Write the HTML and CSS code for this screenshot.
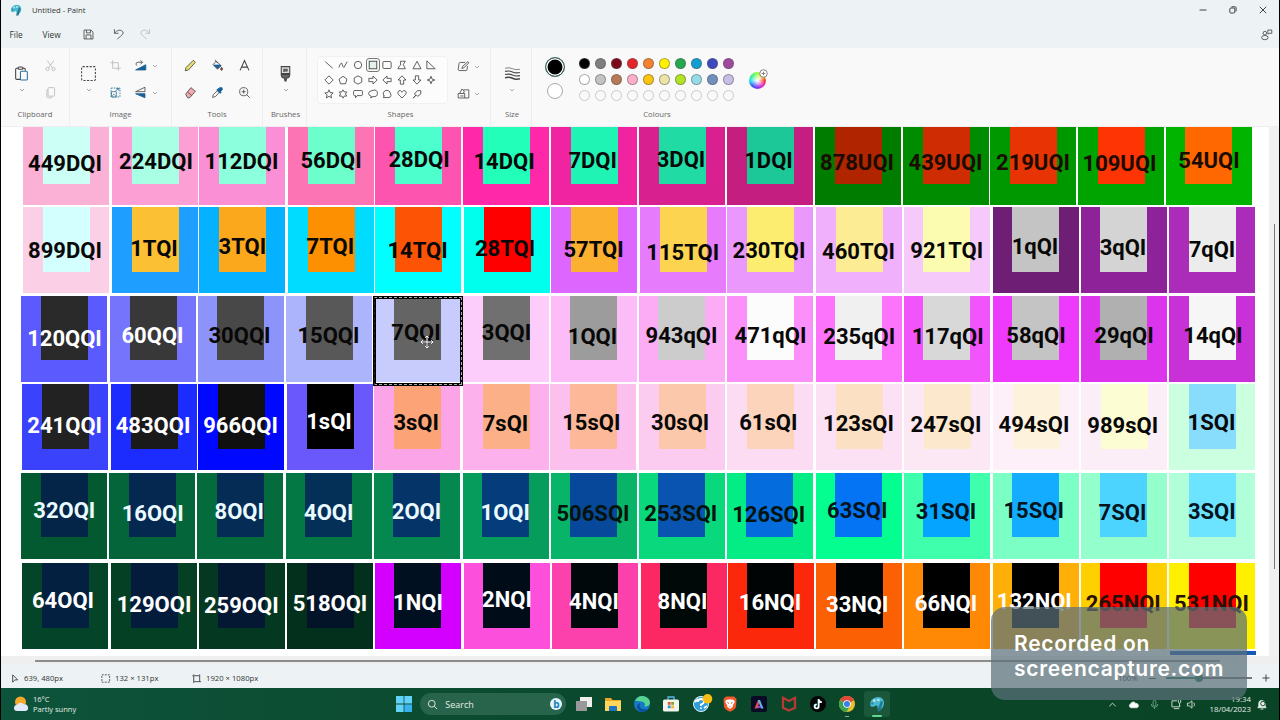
FILE: index.html
```html
<!DOCTYPE html>
<html lang="en-gb">
<head>
    <meta charset="UTF-8">
    <meta name="viewport" content="width=device-width, initial-scale=1.0">
    <title>Untitled - Paint</title>
    <link rel="stylesheet" href="styles.css">
</head>
<body>
<div class="window">
    <header class="titlebar">
        <svg class="logo" viewBox="0 0 24 24"><use href="#palette"/></svg>
        <span class="title">Untitled - Paint</span>
        <div class="winButtons">
            <svg viewBox="0 0 12 12"><path d="M2.5 6h7"/></svg>
            <svg viewBox="0 0 12 12"><rect x="2.8" y="4" width="5" height="5" rx="1"/><path d="M4.5 2.8h3.6q1 0 1 1v3.6"/></svg>
            <svg viewBox="0 0 12 12"><path d="M2.8 2.8l6.4 6.4M9.2 2.8L2.8 9.2"/></svg>
        </div>
    </header>
    <nav class="menubar">
        <span class="menuFile">File</span>
        <span class="menuView">View</span>
        <svg class="icon save" viewBox="0 0 16 16"><path d="M3.5 2.500h7.500l2.500 2.500v8.500h-11v-11zM5.500 2.500v3.500h5v-3.500M5 13.500v-5h6v5"/></svg>
        <svg class="icon undo" viewBox="0 0 16 16"><path d="M3 1.500v5h5M3.200 6.300Q8 .8 12 3.500T11 9.500L6.500 14"/></svg>
        <svg class="icon redo off" viewBox="0 0 16 16"><path d="M13 1.500v5H8M12.800 6.300Q8 .8 4 3.500T5 9.500L9.500 14"/></svg>
        <svg class="icon share" viewBox="0 0 16 16"><circle cx="6" cy="6.300" r="2.200"/><ellipse cx="6" cy="11.800" rx="4" ry="2.600"/><path d="M9.500 2.500h5v4h-3.500l-1.200 1.200z"/></svg>
    </nav>
    <section class="ribbon">
        <div class="group clipboard">
            <div class="tools">
                <div class="big">
                    <svg class="icon large" viewBox="0 0 16 16"><path d="M7 13.500H3.500q-1 0-1-1V4q0-1 1-1H5M9 3h1.500q1 0 1 1v1.500"/><rect x="4.800" y="1.800" width="4.600" height="2.200" rx="1"/><rect class="blueLine" x="7" y="5.800" width="6.500" height="8.400" rx="1"/></svg>
                    <svg class="chev" viewBox="0 0 6 6"><path d="M1 2l2 2 2-2"/></svg>
                </div>
                <div class="pair">
                    <svg class="icon off" viewBox="0 0 16 16"><path d="M4 2l6.500 9M12 2l-6.500 9"/><circle cx="4.300" cy="12.300" r="2"/><circle cx="11.700" cy="12.300" r="2"/></svg>
                    <svg class="icon off" viewBox="0 0 16 16"><rect x="5" y="2" width="8" height="10.500" rx="1"/><path d="M5 4l-1.500 1v7.500q0 2 2 2H10"/></svg>
                </div>
            </div>
            <span class="caption">Clipboard</span>
        </div>
        <div class="group image">
            <div class="tools">
                <div class="big">
                    <svg class="icon large" viewBox="0 0 16 16"><rect class="dashed" x="1.500" y="1.500" width="13" height="13" rx="1"/></svg>
                    <svg class="chev" viewBox="0 0 6 6"><path d="M1 2l2 2 2-2"/></svg>
                </div>
                <div class="pair">
                    <svg class="icon off" viewBox="0 0 16 16"><path d="M4.500 1.500v10H14.500M1.500 4.500h10V14.500"/></svg>
                    <svg class="icon" viewBox="0 0 16 16"><rect class="dashed blueLine" x="2.500" y="2.500" width="11" height="11"/><path class="blueLine" d="M3 7h6v6.500H3zM4 12l2-2 2 2M8 6l4-3M12 6V3H9"/></svg>
                </div>
                <div class="pair wide">
                    <div><svg class="icon" viewBox="0 0 16 16"><path class="blue" d="M14.500 7v6.500H2z"/><path d="M3 8q-1.500-4 2-4h5M8 1.500l2.500 2.500L8 6.500"/></svg><svg class="chev" viewBox="0 0 6 6"><path d="M1 2l2 2 2-2"/></svg></div>
                    <div><svg class="icon" viewBox="0 0 16 16"><path d="M13.500 7L2 7 13.500 1.500z"/><path class="blue" d="M2 9.500h11.500V14.500z"/></svg><svg class="chev" viewBox="0 0 6 6"><path d="M1 2l2 2 2-2"/></svg></div>
                </div>
            </div>
            <span class="caption">Image</span>
        </div>
        <div class="group toolset">
            <div class="toolGrid">
                <svg class="icon" viewBox="0 0 16 16"><path class="yellow" d="M1.500 14.500l1-4L11.500 1.500l2.500 2.500L5.500 13.500z"/></svg>
                <svg class="icon" viewBox="0 0 16 16"><path d="M6.500 2.500l6 6-4.500 4-5.500-5.500zM5 1l3 4"/><path class="blue" d="M3.500 7.500h8.500l-4 4.500z"/><path class="red" d="M13 10q2.500 3 0 4-2.500-1 0-4z"/></svg>
                <svg class="icon" viewBox="0 0 16 16"><path class="thick" d="M2.500 14L8 2l5.500 12M4.500 10h7"/></svg>
                <svg class="icon" viewBox="0 0 16 16"><path class="pink" d="M2 10l6.500-8 5.500 4.500-7 8H4.500z"/><path d="M4.500 7.500l5 4.200"/></svg>
                <svg class="icon" viewBox="0 0 16 16"><path d="M2 14l.8-3.500L9 5l2 2-5.500 6z"/><path class="blue" d="M8 4l1.200-.8L11 2q3.500-1 3 2.500L12 6.500l.5 1.500-1.300 1L7 5z"/></svg>
                <svg class="icon" viewBox="0 0 16 16"><circle cx="7" cy="7" r="5"/><path d="M10.500 10.500L14.500 14.500M4.500 7h5M7 4.500v5"/></svg>
            </div>
            <span class="caption">Tools</span>
        </div>
        <div class="group brushes">
            <div class="tools">
                <div class="big">
                    <svg class="icon large" viewBox="0 0 16 16"><path class="handle" d="M4 1.500h8v6.500H4zM6.500 3.500v3M7 4h2.500v1.500H7"/><path class="tip" d="M4 9h8q0 3-3 3.500l-.5 2.500h-1L7 12.500Q4 12 4 9z"/></svg>
                    <svg class="chev" viewBox="0 0 6 6"><path d="M1 2l2 2 2-2"/></svg>
                </div>
            </div>
            <span class="caption">Brushes</span>
        </div>
        <div class="group shapes">
            <div class="shapeRow">
                <div class="shapeBox">
                    <svg viewBox="0 0 12 12"><path d="M1.500 2l9 8"/></svg>
                    <svg viewBox="0 0 12 12"><path d="M1 9Q4 1 5 5T7 9L11 2"/></svg>
                    <svg viewBox="0 0 12 12"><circle cx="6" cy="6" r="4.400"/></svg>
                    <svg class="chosen" viewBox="0 0 12 12"><rect x="1.500" y="1.500" width="9" height="9"/></svg>
                    <svg viewBox="0 0 12 12"><rect x="1" y="1.800" width="10" height="8.400" rx="1.500"/></svg>
                    <svg viewBox="0 0 12 12"><path d="M4 1.500h6L7.500 5.500 10 10.500H1L3 7l1.500-1z"/></svg>
                    <svg viewBox="0 0 12 12"><path d="M6 1.500l4.800 9H1.200z"/></svg>
                    <svg viewBox="0 0 12 12"><path d="M1 1v9.500h10z"/></svg>
                    <svg viewBox="0 0 12 12"><path d="M6 1L11 6 6 11 1 6z"/></svg>
                    <svg viewBox="0 0 12 12"><path d="M6 1.500l4.700 3.500-1.700 5.500H3L1.300 5z"/></svg>
                    <svg viewBox="0 0 12 12"><path d="M6 1l4.500 2.500v5L6 11 1.500 8.500v-5z"/></svg>
                    <svg viewBox="0 0 12 12"><path d="M1 4h5V1.200L11 6 6 10.800V8H1z"/></svg>
                    <svg viewBox="0 0 12 12"><path d="M11 4H6V1.200L1 6l5 4.800V8h5z"/></svg>
                    <svg viewBox="0 0 12 12"><path d="M4 11V6H1.200L6 1l4.800 5H8v5z"/></svg>
                    <svg viewBox="0 0 12 12"><path d="M4 1v5H1.200L6 11l4.800-5H8V1z"/></svg>
                    <svg viewBox="0 0 12 12"><path d="M6 1.500l1.200 3.300 3.300 1.200-3.300 1.200L6 10.500 4.800 7.200 1.500 6l3.300-1.200z"/></svg>
                    <svg viewBox="0 0 12 12"><path d="M6 1l1.400 3.300 3.600.4-2.700 2.400.8 3.600L6 8.800l-3.100 1.900.8-3.600L1 4.700l3.600-.4z"/></svg>
                    <svg viewBox="0 0 12 12"><path d="M6 1l1.400 2.500h3L9 6l1.400 2.500h-3L6 11 4.600 8.500h-3L3 6 1.600 3.500h3z"/></svg>
                    <svg viewBox="0 0 12 12"><path d="M2 1.800h8q1.300 0 1.300 1.300v3.500q0 1.300-1.300 1.300H5l-2 2.600V7.900H2Q.7 7.900.7 6.600V3.100Q.7 1.800 2 1.800z"/></svg>
                    <svg viewBox="0 0 12 12"><path d="M4 8.700Q.7 7.800.7 5.200T6 1.500t5.300 3.700T6 9L3.200 10.800z"/></svg>
                    <svg viewBox="0 0 12 12"><path d="M2 8Q1 6 2 3.800T6 1.500 10.500 6 6 10.300H1.500L2.800 8z"/></svg>
                    <svg viewBox="0 0 12 12"><path d="M6 10.800L1.600 6.500Q0 4 2 2.300T6 3.800Q7.800.8 10 2.300t.4 4.200z"/></svg>
                    <svg viewBox="0 0 12 12"><path d="M1.500 11L4.500 7.500 2.800 6l3.700-4H10.500v4L6.800 8.800 5 7z"/></svg>
                </div>
                <div class="shapeOpts">
                    <div><svg class="icon" viewBox="0 0 16 16"><path d="M10 3H4Q3 3 2.500 4L1.500 11.500q0 1.500 1.500 1.500h8q1 0 1.200-1L13 7.500"/><path d="M6 10.500l1-2.800L13.500 2l1.200 1.500-6.200 6z"/></svg><svg class="chev" viewBox="0 0 6 6"><path d="M1 2l2 2 2-2"/></svg></div>
                    <div><svg class="icon" viewBox="0 0 16 16"><path d="M8 3.500h6.500v10h-13V8M1.500 8h8v5.500M3.500 7.500l2.500-5 3 2.500-1 2.500M4 11h4"/></svg><svg class="chev" viewBox="0 0 6 6"><path d="M1 2l2 2 2-2"/></svg></div>
                </div>
            </div>
            <span class="caption">Shapes</span>
        </div>
        <div class="group size">
            <div class="tools">
                <div class="big">
                    <svg class="icon large" viewBox="0 0 16 16"><path class="thin" d="M1 3q4-1 7 .5t7 .5"/><path d="M1 6q4-1 7 .5t7 .5"/><path d="M1 9q4-1 7 .5t7 .5"/><path class="fat" d="M1 12q4-1 7 .5t7 .5"/></svg>
                    <svg class="chev" viewBox="0 0 6 6"><path d="M1 2l2 2 2-2"/></svg>
                </div>
            </div>
            <span class="caption">Size</span>
        </div>
        <div class="group colours">
            <div class="colourRow">
                <div class="current">
                    <span class="primary"></span>
                    <span class="secondary"></span>
                </div>
                <div class="swatches" id="swatches"></div>
                <div class="wheel"><svg viewBox="0 0 10 10"><circle cx="5" cy="5" r="4.200"/><path d="M5 3v4M3 5h4"/></svg></div>
            </div>
            <span class="caption">Colours</span>
        </div>
    </section>
    <main class="workspace">
        <div class="canvas" id="canvas">
            <div class="selection"></div>
            <svg class="cursor" viewBox="0 0 14 14"><path class="edge" d="M7 1v12M1 7h12"/><path d="M7 1v12M1 7h12M5.200 2.800L7 1l1.800 1.800M5.200 11.200L7 13l1.800-1.800M2.800 5.200L1 7l1.800 1.800M11.200 5.200L13 7l-1.800 1.800"/></svg>
        </div>
        <div class="scrollV"><span></span></div>
    </main>
    <div class="scrollH"><span></span></div>
    <footer class="status">
        <span class="cell pos"><svg viewBox="0 0 12 12"><path d="M4 2l5.500 5.500H6.500L4 10z"/></svg>639, 480px</span>
        <span class="cell sel"><svg viewBox="0 0 12 12"><rect class="dashed" x="2" y="2" width="8.500" height="8"/></svg>132 × 131px</span>
        <span class="cell dim"><svg viewBox="0 0 12 12"><rect x="3" y="3" width="6.500" height="6.500"/><path d="M1.500 3h1M3 1.500v1M9.500 1.500v1M10 9.500h1M3 10v1"/></svg>1920 × 1080px</span>
        <div class="zoom">
            <span>100%</span>
            <i class="minus"></i>
            <div class="track"><b></b></div>
            <svg viewBox="0 0 10 10"><path d="M5 1.500v7M1.500 5h7"/></svg>
        </div>
    </footer>
</div>

<div class="taskbar">
    <div class="weather">
        <svg viewBox="0 0 16 16"><circle cx="7.500" cy="6" r="5.500" fill="#f5a82a"/><path d="M4 15a3 3 0 0 1 0-6 4 4 0 0 1 7-.5 3.200 3.200 0 0 1 1.500 6.500z" fill="#dfe9fa"/></svg>
        <div><p>16°C</p><p>Partly sunny</p></div>
    </div>
    <div class="apps">
        <svg class="start" viewBox="0 0 16 16"><path fill="#5fd3fa" d="M0 0h7.600v7.600H0zM8.400 0H16v7.600H8.400zM0 8.400h7.600V16H0z"/><path fill="#36b2ee" d="M8.400 8.400H16V16H8.400z"/></svg>
        <div class="search">
            <svg viewBox="0 0 12 12"><circle cx="5.200" cy="5.200" r="3.700"/><path d="M8 8l3 3"/></svg>
            <span>Search</span>
            <i>b</i>
        </div>
        <svg viewBox="0 0 16 16"><path fill="#eee" d="M4 1h12v10H4z"/><path fill="#999" d="M0 5h11v10H0z"/></svg>
        <svg viewBox="0 0 16 16"><path fill="#e9a825" d="M0 2h6l1.500 2H16v11H0z"/><path fill="#ffd65c" d="M0 5h16v10H0z"/><path fill="#1a75c4" d="M4 15v-4q0-1 1-1h6q1 0 1 1v4z"/></svg>
        <svg viewBox="0 0 16 16"><circle cx="8" cy="8" r="8" fill="#1679c8"/><path fill="#55d493" d="M1 5q3-6 9-4.800Q16 2 16 7q-1 4-6 3.500 2-2 0-4T1 5z"/><path fill="#0c4c9c" d="M6 7q-2 6 5 6.500 2 0 3-.7Q11 17 7 15.500T3 10q.5-2 3-3z"/></svg>
        <svg viewBox="0 0 16 16"><path fill="none" stroke="#5bb8e8" stroke-width="1.300" d="M5 4V1h6v3"/><rect y="3.500" width="16" height="12" rx="1.500" fill="#f2f4ee"/><path fill="#e3562e" d="M4.800 6h2.800v2.800H4.800z"/><path fill="#74a92b" d="M8.200 6H11v2.800H8.200z"/><path fill="#2d8fd5" d="M4.800 9.500h2.800v2.800H4.800z"/><path fill="#f5b52a" d="M8.200 9.500H11v2.800H8.200z"/></svg>
        <svg class="help" viewBox="0 0 20 18"><circle cx="8" cy="10" r="7.500" fill="#2f9edb" stroke="#dff3fb"/><path fill="none" stroke="#fff" stroke-width="1.800" d="M5 8q0-3 3-3t3 2.500q0 2-3 3V12M8 13.500v1.500M2 8l3-3M11 14l3-2"/><circle cx="14.500" cy="4.800" r="4.800" fill="#fcbc16"/></svg>
        <svg viewBox="0 0 16 16"><path fill="#f05a2c" d="M4 .5h8L14.500 3 14 11q-1 2.500-6 4.800Q3 13.500 2 11L1.500 3z"/><path fill="#fff" d="M4 4l4-.8L12 4l.8 2-2 3.500.2 1L8 13l-3-2.500.2-1L3.200 6z"/><path fill="#f05a2c" d="M5 6l2 .7-.5 1.500zM11 6l-2 .7.500 1.500zM7 10.500h2l-1 1z"/></svg>
        <svg viewBox="0 0 16 16"><rect width="16" height="16" rx="2" fill="#070b24"/><path fill="#ec4a4a" d="M3.500 12.500L7 4h2l-2.500 8.500z"/><path fill="#5db4f4" d="M7 4h2l3.500 8.500H10L7.500 6z"/><path fill="#a753cf" d="M6 10l4 .2v1.500L5.500 12z"/></svg>
        <svg viewBox="0 0 16 16"><path fill="none" stroke="#b73a36" stroke-width="2.300" d="M2 1.800L8 5l6-3.200v10L8 14.500 2 11.800z"/></svg>
        <svg viewBox="0 0 16 16"><circle cx="8" cy="8" r="8" fill="#050505"/><path fill="none" stroke="#59e3df" stroke-width="1.500" d="M8.300 3v7.200a2 2 0 1 1-2-2M8.500 3.500q.7 2.500 3 2.700"/><path fill="none" stroke="#fff" stroke-width="1.500" d="M8.800 3.300v7.200a2 2 0 1 1-2-2M8.800 3.500q.7 2.500 3 2.700"/></svg>
        <div class="running"><svg viewBox="0 0 16 16"><circle cx="8" cy="8" r="8" fill="#e8c030"/><path fill="#dd4a3c" d="M8 8L1 4.200A8 8 0 0 1 15 4.200z"/><path fill="#37a552" d="M8 8L1 4.200A8 8 0 0 0 7.500 16L11 10z"/><circle cx="8" cy="8" r="3.800" fill="#fff"/><circle cx="8" cy="8" r="3" fill="#3b7de8"/></svg></div>
        <div class="running active"><svg viewBox="0 0 24 24"><g id="palette"><path fill="#48b8d0" d="M2 14Q1 6 8 3q6-3 11 0 5 4 3 11-2 6-6 7-4 0-3-4 0-4-4-2-6 3-7-1z"/><path fill="#b7e8e6" d="M8 5a2 2 0 1 1 0 4 2 2 0 0 1 0-4zM14 4a2 2 0 1 1 0 4 2 2 0 0 1 0-4z"/><path fill="#23788c" d="M18 7l3 2-4 14h-5z"/><circle cx="5" cy="11" r="1.800" fill="#2b8ba4"/></g></svg></div>
    </div>
    <div class="tray">
        <svg class="up" viewBox="0 0 12 12"><path d="M2.500 8L6 4.500 9.500 8"/></svg>
        <svg class="cloud" viewBox="0 0 12 12"><path fill="#fff" d="M3 9.500a2.300 2.300 0 0 1 0-4.300 3 3 0 0 1 5.500-.3 2.300 2.300 0 0 1 1 4.600z"/></svg>
        <svg class="mic" viewBox="0 0 12 12"><rect x="4.500" y="1.500" width="3" height="6" rx="1.500"/><path d="M2.500 5.500q0 3.500 3.500 3.500t3.500-3.500M6 9v2"/></svg>
        <svg class="net" viewBox="0 0 12 12"><path d="M6.500 2H1v6.500h8.500V7M3 10.500h6M8 1v2.500q0 1 1.300 1t1.300-1V1M9.300 4.500V8"/></svg>
        <svg class="vol" viewBox="0 0 12 12"><path d="M1.500 4.500H3.500L6.500 2v8L3.500 7.500H1.500zM8.500 4q1.500 2 0 4"/></svg>
        <div class="clock"><p>19:34</p><p>18/04/2023</p></div>
        <svg class="bell" viewBox="0 0 12 12"><path fill="#e8efe9" d="M2 9.500l1-2V5q0-3.500 3-3.500T10 5v2.500l1 2z"/><circle cx="7.500" cy="5" r="2.400" fill="#e8efe9" stroke="#0a4427"/><path d="M5 11h3"/></svg>
    </div>
</div>
<div class="watermark"><p>Recorded on</p><p class="site">screencapture.com</p></div>
<script src="script.js"></script>
</body>
</html>
```
FILE: styles.css
```css
*
{
    box-sizing: border-box;
}

body
{
    margin: 0;
    width: 1280px;
    height: 720px;
    overflow: hidden;
    background: #000;
    color: #333;
    font-family: "Open Sans", "Noto Sans", sans-serif;
    font-size: 7.500px;
}

p
{
    margin: 0;
}

svg
{
    display: block;
    flex: none;
    overflow: visible;
}

.window
{
    width: 1278px;
    height: 688px;
    margin-left: 1px;
    background: #edf3f4;
    display: flex;
    flex-direction: column;
}

.window svg
{
    fill: none;
    stroke: #444;
    stroke-width: 1;
}

.titlebar
{
    height: 20px;
    display: flex;
    align-items: center;
    padding-left: 9px;
}

.window .logo
{
    width: 12px;
    height: 12px;
    stroke: none;
}

.title
{
    margin-left: 10px;
    font-size: 7.700px;
}

.winButtons
{
    margin-left: auto;
    margin-right: 10px;
    display: flex;
    gap: 18px;
}

.winButtons svg
{
    width: 12px;
    height: 12px;
}

.menubar
{
    height: 28px;
    display: flex;
    align-items: center;
    font-size: 8.300px;
    padding-left: 8.500px;
}

.menuFile
{
    width: 33px;
}

.menuView
{
    width: 39px;
}

.icon
{
    width: 13px;
    height: 13px;
}

.save
{
    margin-right: 17.500px;
}

.undo
{
    margin-right: 14px;
}

.share
{
    margin-left: auto;
    margin-right: 6px;
}

.window .off
{
    stroke: #b5b8b9;
}

.ribbon
{
    height: 79px;
    background: #f9f9f9;
    border-bottom: 1px solid #eee;
    display: flex;
}

.group
{
    height: 78px;
    border-right: 1px solid #eee;
    display: flex;
    flex-direction: column;
    justify-content: space-between;
    align-items: center;
    padding-bottom: 6px;
    color: #666;
}

.caption
{
    font-size: 7.700px;
    line-height: 12px;
}

.clipboard { width: 69px; }
.image { width: 102px; }
.toolset { width: 91px; }
.brushes { width: 44px; padding-left: 2px; }
.shapes { width: 184px; }
.size { width: 41px; padding-left: 2px; }
.colours { width: 250px; border-right: 0; }

.tools
{
    display: flex;
    gap: 14px;
}

.big
{
    padding-top: 17px;
    display: flex;
    flex-direction: column;
    align-items: center;
    gap: 5px;
}

.large
{
    width: 17px;
    height: 17px;
}

.window .chev
{
    width: 6px;
    height: 6px;
    stroke: #aaa;
}

.pair
{
    padding-top: 11px;
    display: flex;
    flex-direction: column;
    gap: 14px;
}

.image .tools
{
    gap: 12px;
    padding-right: 3px;
}

.wide div
{
    display: flex;
    align-items: center;
    gap: 5px;
}

.dashed
{
    stroke-dasharray: 2 1.300;
}

.blueLine
{
    stroke: #2d7596;
}

.blue
{
    fill: #185f95;
    stroke: #185f95;
}

.yellow { fill: #e8e070; }
.red { fill: #c33; }
.pink { fill: #f2aab0; }
.handle { fill: #ddd; }
.tip { fill: #666; }
.thin { stroke-width: .600; }
.thick { stroke-width: 1.300; }
.fat { stroke-width: 1.500; }

.toolGrid
{
    display: grid;
    grid-template-columns: 13px 13px 13px;
    column-gap: 14px;
    row-gap: 14px;
    padding-top: 11px;
}

.shapeRow
{
    display: flex;
    gap: 9px;
    padding: 8px 1px 0 0;
}

.shapes .caption
{
    padding-left: 4px;
}

.shapeBox
{
    width: 131px;
    height: 48px;
    background: #fcfcfc;
    border: 1px solid #f1f1f1;
    border-radius: 3px;
    display: grid;
    grid-template-columns: repeat(8, 10px);
    grid-auto-rows: 10px;
    column-gap: 4.700px;
    row-gap: 4.500px;
    padding: 3px 0 0 6px;
}

.shapeBox svg
{
    width: 10px;
    height: 10px;
}

.chosen
{
    outline: 1px solid #777;
    outline-offset: 1px;
    border-radius: 1px;
    background: #e5f1e9;
}

.shapeOpts
{
    display: flex;
    flex-direction: column;
    gap: 14px;
    padding-top: 4px;
}

.shapeOpts div
{
    display: flex;
    align-items: center;
    gap: 4px;
}

.colourRow
{
    width: 250px;
    display: flex;
    padding: 8px 0 0 13px;
}

.current
{
    width: 20px;
    display: flex;
    flex-direction: column;
    align-items: center;
    gap: 6px;
    padding-top: 1px;
}

.primary
{
    width: 20px;
    height: 20px;
    border: 1px solid #3c6e67;
    border-radius: 50%;
    background: #000;
    box-shadow: inset 0 0 0 1.500px #fff;
}

.secondary
{
    width: 16px;
    height: 16px;
    border: 1px solid #aaa;
    border-radius: 50%;
    background: #fff;
}

.swatches
{
    display: grid;
    grid-template-columns: repeat(10, 11px);
    grid-auto-rows: 11px;
    gap: 5px;
    margin: 2px 0 0 14px;
}

.swatches span
{
    border: 1px solid rgba(90, 90, 90, .5);
    border-radius: 50%;
}

.swatches .empty
{
    border-color: #c9c9cc;
}

.wheel
{
    width: 17px;
    height: 17px;
    margin: 16px 0 0 15px;
    border-radius: 50%;
    background: radial-gradient(circle, #fff 5%, transparent 60%), conic-gradient(#9dfc40, #f8e02c, #f43c2c, #f028c4, #7c30f4, #2c60f4, #2ce0f0, #3cf47c, #9dfc40);
}

.wheel svg
{
    width: 9px;
    height: 9px;
    margin: -3px 0 0 10px;
    stroke: #777;
}

.wheel circle
{
    fill: #fff;
}

.workspace
{
    height: 529px;
    display: flex;
}

.canvas
{
    position: relative;
    width: 1268px;
    background: #fff;
    overflow: hidden;
}

.tileRow
{
    display: flex;
}

.tile
{
    position: relative;
    flex: none;
    width: 86px;
    height: 100%;
}

.core
{
    width: 47px;
    margin-left: 19.500px;
}

/* the value is written over both colours of the tile */
.label
{
    position: absolute;
    transform: translate(-50%, -50%);
    font: bold 22px/26px Roboto, sans-serif;
    white-space: nowrap;
}

.nextPiece
{
    width: 86px;
    height: 4px;
    margin: 2px 0 0 1168.500px;
    background: #1758b4;
}

.selection
{
    position: absolute;
    left: 372px;
    top: 169px;
    width: 90px;
    height: 90px;
    z-index: 2;
    border: 3px solid #000;
}

.selection::after
{
    content: "";
    position: absolute;
    inset: -2px;
    border: 1px dashed #aaa;
    border-left-color: #222;
}

.window .cursor
{
    position: absolute;
    left: 419px;
    top: 208px;
    width: 14px;
    height: 14px;
    z-index: 3;
    stroke: #fff;
}

.cursor .edge
{
    stroke: #333;
    stroke-width: 2.500;
}

.scrollV
{
    flex: 1;
    background: #f0f0f0;
    padding: 97px 0 0 5px;
}

.scrollV span
{
    display: block;
    width: 1px;
    height: 345px;
    background: #777;
}

.scrollH
{
    height: 8px;
    background: #efefef;
    padding: 4px 0 0 34px;
}

.scrollH span
{
    display: block;
    width: 1185px;
    height: 2px;
    background: #8c8c8c;
}

.status
{
    height: 24px;
    display: flex;
    align-items: center;
    padding: 4px 0 0 8px;
    line-height: 10px;
    font-size: 7.700px;
}

.cell
{
    display: flex;
    align-items: center;
    gap: 4px;
}

.cell svg
{
    width: 11px;
    height: 11px;
}

.pos { width: 91px; }
.sel { width: 91px; }

.zoom
{
    margin-left: auto;
    margin-right: 8px;
    display: flex;
    align-items: center;
}

.zoom span
{
    width: 31px;
}

.minus
{
    width: 7px;
    height: 1px;
    margin-right: 10px;
    background: #444;
}

.track
{
    width: 86px;
    height: 2px;
    margin-right: 9px;
    background: linear-gradient(to right, #277a63 32px, #777 32px);
}

.track b
{
    display: block;
    width: 8px;
    height: 8px;
    margin: -3px 0 0 29px;
    border-radius: 50%;
    background: #187458;
}

.zoom svg
{
    width: 10px;
    height: 10px;
}

.taskbar
{
    height: 32px;
    margin: 0 1px;
    background: linear-gradient(to right, #0d533b, #0a4629 60%, #0a4427);
    color: #e4eee8;
    display: grid;
    grid-template-columns: 395px 1fr auto;
    align-items: center;
}

.weather
{
    display: flex;
    gap: 4px;
    padding-left: 12px;
    align-items: center;
    line-height: 10.500px;
}

.weather svg
{
    width: 16px;
    height: 16px;
}

.apps
{
    display: flex;
    align-items: center;
    gap: 13.300px;
}

.apps svg
{
    width: 16px;
    height: 16px;
}

.apps .start
{
    margin-right: -5px;
}

.search
{
    width: 146px;
    height: 22px;
    margin-right: -4px;
    border-radius: 11px;
    background: #28634b;
    display: flex;
    align-items: center;
    padding: 0 4px 0 7px;
    gap: 7px;
    font-size: 9px;
}

.search svg
{
    width: 11px;
    height: 11px;
    fill: none;
    stroke: #e8f0ec;
}

.search i
{
    width: 12px;
    height: 12px;
    margin-left: auto;
    border-radius: 50%;
    background: #e3f3fc;
    color: #167cb9;
    font: bold 10px/12px "Open Sans", sans-serif;
    text-align: center;
}

.apps .help
{
    width: 20px;
    height: 18px;
    margin: -2px -4px 0 0;
}

.running
{
    position: relative;
    display: flex;
}

.running::after
{
    content: "";
    position: absolute;
    left: 6px;
    bottom: -5px;
    width: 4px;
    height: 1.500px;
    background: #8fa79a;
}

.active
{
    padding: 5px;
    margin-left: -5px;
    background: #1b573b;
    border-radius: 3px;
}

.active::after
{
    left: 8px;
    bottom: 0;
    width: 10px;
    height: 2px;
    border-radius: 1px;
    background: #62d890;
}

.tray
{
    display: flex;
    align-items: center;
    padding-right: 12px;
}

.tray svg
{
    width: 11px;
    height: 11px;
    fill: none;
    stroke: #d3e2da;
}

.tray .up { margin-right: 10px; }
.tray .cloud { margin-right: 10px; }
.tray .mic { margin-right: 11px; stroke: #6ca487; }
.tray .net { margin-right: 4px; }

.clock
{
    width: 54px;
    margin-right: 5px;
    text-align: right;
    font-size: 7.800px;
    line-height: 10.500px;
}

.watermark
{
    position: absolute;
    left: 991px;
    top: 607px;
    width: 256px;
    height: 93px;
    z-index: 5;
    border-radius: 14px;
    background: rgba(92, 112, 122, .72);
    color: #fff;
    padding: 24px 0 0 23px;
    font: 600 21px/25px Inter, sans-serif;
    letter-spacing: .700px;
}
```
FILE: script.js
```js
// each row: top, height, height of the inner block, then the tiles
// tile: label, left, label centre x, label centre y, outer colour, inner colour, text colour
var rows = [
    {top: 127, h: 78, core: 57, tiles: [
        ["449DQI",23,65,162.8,"#fbb0d6","#ccfff5"],
        ["224DQI",112,156,161.3,"#fb9fd5","#a8ffe4"],
        ["112DQI",199,241.5,160.8,"#fb8fd5","#8cffdc"],
        ["56DQI",288,331,160.3,"#fd74b4","#6cffcc"],
        ["28DQI",375,419,159,"#fd54b0","#4cffcc"],
        ["14DQI",463,504,161.3,"#ff28a8","#22ffb8"],
        ["7DQI",551,592.7,160.3,"#f024a0","#20f4b4"],
        ["3DQI",639,681,159,"#d8208f","#20dca4"],
        ["1DQI",727,768.5,160.3,"#c41f80","#1cc898"],
        ["878UQI",815,857,162,"#007c00","#b02400","#1c0c00"],
        ["439UQI",903,945.5,162.5,"#008c00","#d02c04","#1c0c00"],
        ["219UQI",990,1033,162.2,"#009800","#e83404","#1c0c00"],
        ["109UQI",1078,1119.5,163,"#00a400","#ff3404","#1c0c00"],
        ["54UQI",1165.5,1209,160,"#00b400","#ff6800","#1c0c00"]
    ]},
    {top: 207, h: 86, core: 65, tiles: [
        ["899DQI",23,65,250,"#fbcfe6","#d4ffff"],
        ["1TQI",112,154,248.3,"#1e9eff","#fcc034"],
        ["3TQI",199,242.3,246,"#06b2ff","#fca81c"],
        ["7TQI",288,330.3,246,"#00dcff","#fc9000"],
        ["14TQI",375,417.5,249.7,"#00ffff","#fc5404"],
        ["28TQI",464,505,248,"#00ffec","#ff0000"],
        ["57TQI",551,593.5,249.3,"#dd66ff","#fcb030"],
        ["115TQI",640,682.7,251.7,"#e67cfc","#fcd450"],
        ["230TQI",727.4,769,250,"#ea98fc","#fcec70"],
        ["460TQI",816.5,858.5,251.5,"#f0b0fc","#fcec94"],
        ["921TQI",904,946.7,249.7,"#f5cafa","#fcfcb0"],
        ["1qQI",993,1035,245.8,"#6e1e74","#c4c4c4"],
        ["3qQI",1081,1123,246.7,"#8e2298","#d4d4d4"],
        ["7qQI",1169.4,1212,248.7,"#aa2cb8","#ececec"]
    ]},
    {top: 295.5, h: 86, core: 64.5, tiles: [
        ["120QQI",21.4,64.5,338,"#5a5aff","#2a2a2a","#fff"],
        ["60QQI",110.4,152.5,335.3,"#7474fc","#383838","#fff"],
        ["30QQI",198,239.5,335.5,"#8c94fc","#484848"],
        ["15QQI",286.4,328.5,335,"#acb4fc","#585858"],
        ["7QQI",375,416,332,"#c8ccfc","#646464"],
        ["3QQI",463.5,506.5,331.7,"#fcccfa","#707070"],
        ["1QQI",551,592.5,335.7,"#fcbcf8","#9c9c9c"],
        ["943qQI",639,681.5,335.3,"#fcacf4","#cccccc"],
        ["471qQI",727.4,770.5,335.3,"#fc90fa","#fcfcfc"],
        ["235qQI",816,859.3,336,"#fc74fc","#f0f0f0"],
        ["117qQI",904,947.7,336,"#f254fc","#d8d8d8"],
        ["58qQI",993,1036,335.3,"#ee3afc","#c4c4c4"],
        ["29qQI",1081,1124,335,"#dc34ec","#b0b0b0"],
        ["14qQI",1169.4,1213,335.3,"#c830d8","#f6f6f6"]
    ]},
    {top: 384, h: 86, core: 65, tiles: [
        ["241QQI",22,64.7,424.7,"#3a42fc","#222222","#fff"],
        ["483QQI",111,153,424.7,"#1c2cff","#1a1a1a","#fff"],
        ["966QQI",198,240.5,424.7,"#0008ff","#101010","#fff"],
        ["1sQI",287,329,421.3,"#6a58fc","#000000","#fff"],
        ["3sQI",374,416.2,422,"#fca4e8","#fca478"],
        ["7sQI",463,505.5,423,"#fcb0ec","#fcb088"],
        ["15sQI",550,591.3,422.3,"#fcc0ee","#fcb898"],
        ["30sQI",639,680.2,422,"#fcccf0","#fcc8ac"],
        ["61sQI",727,768.3,422,"#fcdcf2","#fcd4bc"],
        ["123sQI",816,858.5,423,"#fce0f4","#fce0c4"],
        ["247sQI",904,946,423.8,"#fce8f4","#fce8cc"],
        ["494sQI",993,1034,423.8,"#fdf0f8","#fdf2dc"],
        ["989sQI",1081,1122.7,425,"#fceef6","#fdfdd4"],
        ["1SQI",1169.4,1211.5,421.7,"#ccffe0","#88dcfc"]
    ]},
    {top: 472.5, h: 86, core: 64.5, tiles: [
        ["32OQI",21,64.3,510,"#045a30","#042448","#eafaff"],
        ["16OQI",109.4,152.7,513,"#04643a","#042850","#eafaff"],
        ["8OQI",197.4,239.3,511,"#046c3c","#042c54","#eafaff"],
        ["4OQI",286,328.8,511.7,"#047844","#043058","#eafaff"],
        ["2OQI",374,416.5,511,"#048850","#043468","#eafaff"],
        ["1OQI",463,505.3,512,"#069c5c","#043c7c","#eafaff"],
        ["506SQI",551,593,513,"#08b468","#08489a","#04140c"],
        ["253SQI",639,680.8,512.7,"#0ad87c","#0854b0","#04140c"],
        ["126SQI",727,768.7,514,"#04ec84","#046cdc","#04140c"],
        ["63SQI",816,857.3,510.3,"#04ff90","#0474f4","#04141c"],
        ["31SQI",904,946,511.2,"#40ffac","#04a4ff","#04141c"],
        ["15SQI",993,1033.7,510.3,"#7cffc4","#14acff","#04141c"],
        ["7SQI",1081,1122.5,512,"#94ffcc","#4cd4ff","#04141c"],
        ["3SQI",1169.4,1211.8,510.7,"#b0ffd8","#6ce4ff","#04141c"]
    ]},
    {top: 562.5, h: 86.5, core: 65, tiles: [
        ["64OQI",22,63,600.3,"#044428","#042040","#fff"],
        ["129OQI",111,154,603.7,"#044024","#041c3c","#fff"],
        ["259OQI",198.5,241.3,605,"#043820","#041834","#fff"],
        ["518OQI",287.4,330,603,"#03301c","#041428","#fff"],
        ["1NQI",375,418,602.3,"#d400ff","#001020","#fff"],
        ["2NQI",464,507,599.3,"#fc50dc","#000c18","#fff"],
        ["4NQI",552,594,601,"#fc40ac","#00080c","#fff"],
        ["8NQI",641,682.5,601,"#fc2864","#000808","#fff"],
        ["16NQI",728,770,602,"#fc280c","#000404","#fff"],
        ["33NQI",816.5,857.3,603.7,"#fc6004","#000404","#fff"],
        ["66NQI",904,946,603,"#ff8804","#000000","#fff"],
        ["132NQI",993,1034.3,601,"#ffb008","#000000","#fff"],
        ["265NQI",1081,1123.3,603,"#ffd000","#ff0000","#281004"],
        ["531NQI",1169.4,1211.5,603.3,"#fff000","#ff0000","#281004"]
    ]}
];

var canvas = document.getElementById("canvas");
var bottom = 127;

rows.forEach(function(r)
{
    var row = document.createElement("div");
    var right = 1;
    row.className = "tileRow";
    row.style.height = r.h + "px";
    row.style.marginTop = (r.top - bottom) + "px";
    bottom = r.top + r.h;

    r.tiles.forEach(function(t)
    {
        var tile = document.createElement("div");
        var core = document.createElement("div");
        var label = document.createElement("span");
        tile.className = "tile";
        tile.style.marginLeft = (t[1] - right) + "px";
        tile.style.background = t[4];
        right = t[1] + 86;

        core.className = "core";
        core.style.height = r.core + "px";
        core.style.background = t[5];

        label.className = "label";
        label.textContent = t[0];
        label.style.left = (t[2] - t[1]) + "px";
        label.style.top = (t[3] - r.top + 0.8) + "px";
        label.style.color = t[6] || "#080808";

        tile.append(core, label);
        row.append(tile);
    });
    canvas.append(row);
});

var next = document.createElement("div");
next.className = "nextPiece";
canvas.append(next);

var colours = ["#000000","#7f7f7f","#7c0818","#e42428","#f48030","#fff200","#24a84c","#109ed0","#3c48c0","#a048a0",
               "#ffffff","#c3c3c3","#b87a56","#ffaec9","#fcc40c","#efe4a8","#b0e420","#94dce8","#7090c0","#c8bee6"];
var swatches = document.getElementById("swatches");
for (let i = 0; i < 30; i++)
{
    var s = document.createElement("span");
    if(i < 20)
        s.style.background = colours[i];
    else
        s.className = "empty";
    swatches.append(s);
}
```
